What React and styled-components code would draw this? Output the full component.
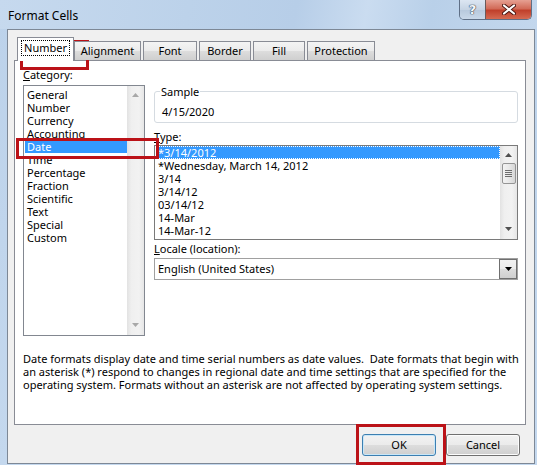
import styled, { createGlobalStyle, css } from "styled-components";

const GlobalStyle = createGlobalStyle`
  html, body {
    margin: 0;
    padding: 0;
    background: #bdd3ea;
  }
  body {
    font-family: "Noto Sans", "DejaVu Sans", sans-serif;
    font-size: 11px;
    color: #000;
  }
  * {
    box-sizing: border-box;
  }
`;

const Window = styled.div`
  position: relative;
  width: 537px;
  height: 465px;
  display: flex;
  flex-direction: column;
  overflow: hidden;
  background: linear-gradient(180deg, #bcd2ea 0%, #c4d8ee 100%);
`;

const TitleBar = styled.div`
  height: 29px;
  flex: none;
  display: flex;
  justify-content: space-between;
  align-items: flex-start;
  padding: 0 5px 0 8px;
  background: linear-gradient(
    100deg,
    #c6d9ee 0%,
    #bcd2ea 35%,
    #b7cee8 55%,
    #cadcf0 68%,
    #b9d0e9 80%,
    #c3d7ed 100%
  );
`;

const Title = styled.div`
  padding-top: 8px;
  line-height: 16px;
  font-size: 12px;
  color: #000;
`;

const CaptionButtons = styled.div`
  display: flex;
  height: 20px;
  border: 1px solid #5f6f86;
  border-top: none;
  border-radius: 0 0 5px 5px;
  overflow: hidden;
`;

const HelpButton = styled.div`
  width: 26px;
  height: 19px;
  display: flex;
  align-items: center;
  justify-content: center;
  background: linear-gradient(180deg, #dce6f2 0%, #c6d4e4 50%, #b7c8dc 51%, #c9d8e9 100%);
  border-right: 1px solid #6a5a5a;
  font-family: "DejaVu Sans", sans-serif;
  font-weight: bold;
  font-size: 13px;
  color: #f4f7fb;
  text-shadow: 0 0 1px #3a4656, 0 0 1px #3a4656, 0 0 1px #3a4656;
`;

const CloseButton = styled.div`
  width: 45px;
  height: 19px;
  display: flex;
  align-items: center;
  justify-content: center;
  background: linear-gradient(180deg, #e6a092 0%, #d26b58 45%, #c0402b 55%, #d56a52 100%);
`;

const Body = styled.div`
  flex: 1;
  margin: 0 2px 1px 7px;
  border: 1px solid #7d8896;
  background: #f0f0f0;
  display: flex;
  flex-direction: column;
  padding: 7px 8px 0 6px;
`;

const TabStrip = styled.div`
  height: 23px;
  display: flex;
  align-items: flex-end;
  padding-left: 3px;
  position: relative;
  z-index: 1;
`;

const Tab = styled.div`
  width: ${(p) => p.$width}px;
  height: 19px;
  margin-right: 2px;
  border: 1px solid #898c95;
  border-bottom: none;
  background: linear-gradient(180deg, #f4f4f4 0%, #ebebeb 50%, #dddddd 51%, #cfcfcf 100%);
  display: flex;
  align-items: center;
  justify-content: center;
  line-height: 14px;

  ${(p) =>
    p.$active &&
    css`
      height: 24px;
      margin-right: 0;
      margin-bottom: -1px;
      background: #fff;
      padding-bottom: 3px;
    `}
`;

const FocusLabel = styled.span`
  border: 1px dotted #000;
  padding: 0 2px;
`;

const Panel = styled.div`
  height: 365px;
  flex: none;
  border: 1px solid #898c95;
  background: #fff;
  padding: 6px 7px 0 8px;
`;

const Columns = styled.div`
  display: grid;
  grid-template-columns: 122px 1fr;
  column-gap: 9px;
`;

const Column = styled.div`
  display: flex;
  flex-direction: column;
`;

const Label = styled.div`
  line-height: 13px;
  margin: ${(p) => p.$margin || "0"};
  white-space: nowrap;
`;

const ListBox = styled.div`
  display: flex;
  flex: none;
  height: ${(p) => p.$height}px;
  border: 1px solid ${(p) => p.$border};
  background: #fff;
`;

const Items = styled.div`
  flex: 1;
  min-width: 0;
  padding: ${(p) => p.$padding};
  overflow: hidden;
`;

const Item = styled.div`
  height: 13px;
  line-height: 13px;
  padding-left: ${(p) => p.$indent}px;
  white-space: nowrap;

  ${(p) =>
    p.$selected &&
    css`
      background: #3399ff;
      color: #fff;
    `}
  ${(p) =>
    p.$focused &&
    css`
      outline: 1px dotted #fff;
      outline-offset: -1px;
    `}
`;

const ScrollBar = styled.div`
  width: 17px;
  flex: none;
  display: flex;
  flex-direction: column;
  align-items: center;
  justify-content: space-between;
  padding: 7px 0 8px;
  background: linear-gradient(90deg, #e2e2e2 0%, #efefef 25%, #f2f2f2 70%, #e6e6e6 100%);
`;

const Thumb = styled.div`
  width: 14px;
  height: 21px;
  margin-top: 6px;
  margin-bottom: auto;
  border: 1px solid #959595;
  border-radius: 2px;
  background: linear-gradient(90deg, #f3f3f3 0%, #e8e8e8 50%, #d6d6d6 100%);
  display: flex;
  flex-direction: column;
  align-items: center;
  justify-content: center;
  gap: 1px;

  span {
    width: 7px;
    height: 1px;
    background: #6e6e6e;
  }
`;

const SampleBox = styled.fieldset`
  margin: 17px 0 0;
  min-width: 0;
  padding: 0 5px 4px;
  border: 1px solid #d5dbe1;
  border-radius: 3px;

  legend {
    padding: 0 1px;
    line-height: 15px;
  }
`;

const SampleValue = styled.div`
  line-height: 13px;
  padding: 6px 0 0 2px;
`;

const Dropdown = styled.div`
  height: 22px;
  flex: none;
  display: flex;
  align-items: stretch;
  border: 1px solid #a0a0a0;
  background: #fff;
  padding: 0 0 0 3px;
`;

const DropdownText = styled.div`
  flex: 1;
  line-height: 20px;
`;

const DropButton = styled.div`
  width: 18px;
  border: 1px solid #6f6f6f;
  background: linear-gradient(180deg, #f2f2f2 0%, #ebebeb 50%, #dddddd 51%, #cfcfcf 100%);
  display: flex;
  align-items: center;
  justify-content: center;
`;

const Description = styled.div`
  margin-top: 16px;
  line-height: 13px;
  white-space: pre;
`;

const Footer = styled.div`
  display: flex;
  justify-content: flex-end;
  gap: 10px;
  padding: 9px 6px 0 0;
`;

const Button = styled.div`
  width: 74px;
  height: 22px;
  border: 1px solid ${(p) => (p.$default ? "#3c7fb1" : "#707070")};
  border-radius: 3px;
  background: linear-gradient(180deg, #f2f2f2 0%, #ebebeb 50%, #dddddd 51%, #cfcfcf 100%);
  box-shadow: inset 0 0 0 1px ${(p) => (p.$default ? "#c9e7f8" : "#fcfcfc")};
  display: flex;
  align-items: center;
  justify-content: center;
  line-height: 14px;
`;

const Marker = styled.div`
  position: absolute;
  left: ${(p) => p.$x}px;
  top: ${(p) => p.$y}px;
  width: ${(p) => p.$w}px;
  height: ${(p) => p.$h}px;
  border: 3px solid #bb1218;
  pointer-events: none;
`;

const Arrow = ({ up, color }) => (
  <svg width="7" height="4" viewBox="0 0 7 4">
    <path d={up ? "M3.5 0 L7 4 L0 4 Z" : "M0 0 L7 0 L3.5 4 Z"} fill={color} />
  </svg>
);

const categories = [
  "General",
  "Number",
  "Currency",
  "Accounting",
  "Date",
  "Time",
  "Percentage",
  "Fraction",
  "Scientific",
  "Text",
  "Special",
  "Custom",
];

const types = [
  "*3/14/2012",
  "*Wednesday, March 14, 2012",
  "3/14",
  "3/14/12",
  "03/14/12",
  "14-Mar",
  "14-Mar-12",
];

const tabs = [
  ["Number", 57],
  ["Alignment", 67],
  ["Font", 54],
  ["Border", 52],
  ["Fill", 52],
  ["Protection", 68],
];

const description =
  "Date formats display date and time serial numbers as date values.  Date formats that begin with\n" +
  "an asterisk (*) respond to changes in regional date and time settings that are specified for the\n" +
  "operating system. Formats without an asterisk are not affected by operating system settings.";

export default function App() {
  return (
    <>
      <GlobalStyle />
      <Window>
        <TitleBar>
          <Title>Format Cells</Title>
          <CaptionButtons>
            <HelpButton>?</HelpButton>
            <CloseButton>
              <svg width="14" height="11" viewBox="0 0 14 11">
                <path d="M2 1.5 L12 9.5 M12 1.5 L2 9.5" stroke="#4a1510" strokeWidth="4" strokeLinecap="round" />
                <path d="M2 1.5 L12 9.5 M12 1.5 L2 9.5" stroke="#fff" strokeWidth="2.2" strokeLinecap="round" />
              </svg>
            </CloseButton>
          </CaptionButtons>
        </TitleBar>

        <Body>
          <TabStrip>
            {tabs.map(([name, width], i) => (
              <Tab key={name} $width={width} $active={i === 0}>
                {i === 0 ? <FocusLabel>{name}</FocusLabel> : name}
              </Tab>
            ))}
          </TabStrip>

          <Panel>
            <Columns>
              <Column>
                <Label $margin="1px 0 4px">
                  <u>C</u>ategory:
                </Label>
                <ListBox $height={251} $border="#828790">
                  <Items $padding="2px 0 0 1px">
                    {categories.map((c) => (
                      <Item key={c} $indent={2} $selected={c === "Date"}>
                        {c}
                      </Item>
                    ))}
                  </Items>
                  <ScrollBar>
                    <Arrow up color="#a8a8a8" />
                    <Arrow color="#a8a8a8" />
                  </ScrollBar>
                </ListBox>
              </Column>

              <Column>
                <SampleBox>
                  <legend>Sample</legend>
                  <SampleValue>4/15/2020</SampleValue>
                </SampleBox>
                <Label $margin="7px 0 2px">
                  <u>T</u>ype:
                </Label>
                <ListBox $height={95} $border="#7a7a7a">
                  <Items $padding="0 0 0 1px">
                    {types.map((t, i) => (
                      <Item key={t} $indent={2} $selected={i === 0} $focused={i === 0}>
                        {t}
                      </Item>
                    ))}
                  </Items>
                  <ScrollBar>
                    <Arrow up color="#4f4f4f" />
                    <Thumb>
                      <span />
                      <span />
                      <span />
                      <span />
                    </Thumb>
                    <Arrow color="#4f4f4f" />
                  </ScrollBar>
                </ListBox>
                <Label $margin="2px 0 3px">
                  <u>L</u>ocale (location):
                </Label>
                <Dropdown>
                  <DropdownText>English (United States)</DropdownText>
                  <DropButton>
                    <Arrow color="#000" />
                  </DropButton>
                </Dropdown>
              </Column>
            </Columns>

            <Description>{description}</Description>
          </Panel>

          <Footer>
            <Button $default>OK</Button>
            <Button>Cancel</Button>
          </Footer>
        </Body>

        <Marker $x={20} $y={40} $w={69} $h={30} />
        <Marker $x={16} $y={138} $w={143} $h={21} />
        <Marker $x={356} $y={424} $w={90} $h={41} />
      </Window>
    </>
  );
}
